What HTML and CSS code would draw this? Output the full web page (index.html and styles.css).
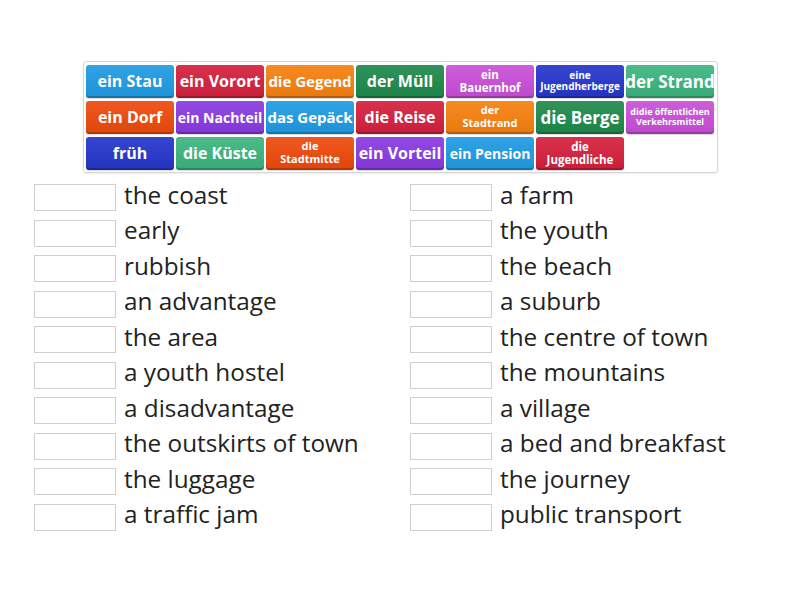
FILE: index.html
```html
<!DOCTYPE html>
<html lang="de">
<head>
<meta charset="utf-8">
<title>Match up</title>
<link rel="stylesheet" href="styles.css">
</head>
<body>
<div class="page">
  <div class="bank">
    <div class="tile c-lblue s16">ein Stau</div>
    <div class="tile c-red s16">ein Vorort</div>
    <div class="tile c-orange s15">die Gegend</div>
    <div class="tile c-green s16">der Müll</div>
    <div class="tile c-magenta two s12">ein<br>Bauernhof</div>
    <div class="tile c-dblue two s10">eine<br>Jugendherberge</div>
    <div class="tile c-teal s17">der Strand</div>

    <div class="tile c-ored s16">ein Dorf</div>
    <div class="tile c-purple s14">ein Nachteil</div>
    <div class="tile c-lblue s15">das Gepäck</div>
    <div class="tile c-red s16">die Reise</div>
    <div class="tile c-orange two s11">der<br>Stadtrand</div>
    <div class="tile c-green s17">die Berge</div>
    <div class="tile c-magenta two s9">didie öffentlichen<br>Verkehrsmittel</div>

    <div class="tile c-dblue s16">früh</div>
    <div class="tile c-teal s16">die Küste</div>
    <div class="tile c-ored two s11">die<br>Stadtmitte</div>
    <div class="tile c-purple s16">ein Vorteil</div>
    <div class="tile c-lblue s14">ein Pension</div>
    <div class="tile c-red two s12">die<br>Jugendliche</div>
  </div>

  <div class="targets">
    <div class="column">
      <div class="row"><span class="slot"></span><span class="label">the coast</span></div>
      <div class="row"><span class="slot"></span><span class="label">early</span></div>
      <div class="row"><span class="slot"></span><span class="label">rubbish</span></div>
      <div class="row"><span class="slot"></span><span class="label">an advantage</span></div>
      <div class="row"><span class="slot"></span><span class="label">the area</span></div>
      <div class="row"><span class="slot"></span><span class="label">a youth hostel</span></div>
      <div class="row"><span class="slot"></span><span class="label">a disadvantage</span></div>
      <div class="row"><span class="slot"></span><span class="label">the outskirts of town</span></div>
      <div class="row"><span class="slot"></span><span class="label">the luggage</span></div>
      <div class="row"><span class="slot"></span><span class="label">a traffic jam</span></div>
    </div>
    <div class="column right">
      <div class="row"><span class="slot"></span><span class="label">a farm</span></div>
      <div class="row"><span class="slot"></span><span class="label">the youth</span></div>
      <div class="row"><span class="slot"></span><span class="label">the beach</span></div>
      <div class="row"><span class="slot"></span><span class="label">a suburb</span></div>
      <div class="row"><span class="slot"></span><span class="label">the centre of town</span></div>
      <div class="row"><span class="slot"></span><span class="label">the mountains</span></div>
      <div class="row"><span class="slot"></span><span class="label">a village</span></div>
      <div class="row"><span class="slot"></span><span class="label">a bed and breakfast</span></div>
      <div class="row"><span class="slot"></span><span class="label">the journey</span></div>
      <div class="row"><span class="slot"></span><span class="label">public transport</span></div>
    </div>
  </div>
</div>
</body>
</html>
```

FILE: styles.css
```css
html, body {
  margin: 0;
  padding: 0;
  background: #ffffff;
}

body {
  font-family: "Open Sans", "Noto Sans", sans-serif;
  color: #222222;
}

.page {
  width: 800px;
  height: 600px;
  padding-top: 61px;
  box-sizing: border-box;
}

.bank {
  margin-left: 83px;
  width: 635px;
  box-sizing: border-box;
  border: 1px solid #d6d6d6;
  border-radius: 3px;
  box-shadow: 0 1px 2px rgba(0, 0, 0, 0.08);
  padding: 3px 2px 2px 2px;
  display: grid;
  grid-template-columns: repeat(7, 88px);
  grid-auto-rows: 33px;
  column-gap: 2px;
  row-gap: 3px;
}

.tile {
  display: flex;
  align-items: center;
  justify-content: center;
  text-align: center;
  color: #ffffff;
  font-weight: 700;
  border-radius: 3px;
  white-space: nowrap;
  box-shadow: inset 0 -2px 0 rgba(0, 0, 0, 0.22), 0 1px 1px rgba(0, 0, 0, 0.15);
  background-image: linear-gradient(to bottom, rgba(255, 255, 255, 0.08), rgba(0, 0, 0, 0.06));
  padding-bottom: 1px;
  box-sizing: border-box;
  overflow: hidden;
}

.two { line-height: 1.15; }

.s17 { font-size: 17px; }
.s16 { font-size: 16px; }
.s15 { font-size: 15px; }
.s14 { font-size: 14px; }
.s12 { font-size: 11.5px; }
.s11 { font-size: 11px; }
.s10 { font-size: 10px; }
.s9 { font-size: 9px; }

.c-lblue { background-color: #1f9be4; }
.c-red { background-color: #d5203d; }
.c-orange { background-color: #f7800f; }
.c-green { background-color: #1e8a4c; }
.c-magenta { background-color: #c94fd9; }
.c-dblue { background-color: #2536cc; }
.c-teal { background-color: #3bb57f; }
.c-ored { background-color: #ee4a0c; }
.c-purple { background-color: #8a3ae2; }

.targets {
  display: flex;
  margin-top: 7px;
  padding-left: 34px;
}

.column {
  display: flex;
  flex-direction: column;
  width: 376px;
}

.row {
  display: flex;
  align-items: center;
  height: 35.5px;
}

.slot {
  display: block;
  width: 82px;
  height: 27px;
  box-sizing: border-box;
  border: 1px solid #cfcfcf;
  background: #ffffff;
  flex: none;
}

.label {
  margin-left: 8px;
  font-size: 24.3px;
  line-height: 1;
  color: #222222;
  white-space: nowrap;
  position: relative;
  top: -3px;
}
```
